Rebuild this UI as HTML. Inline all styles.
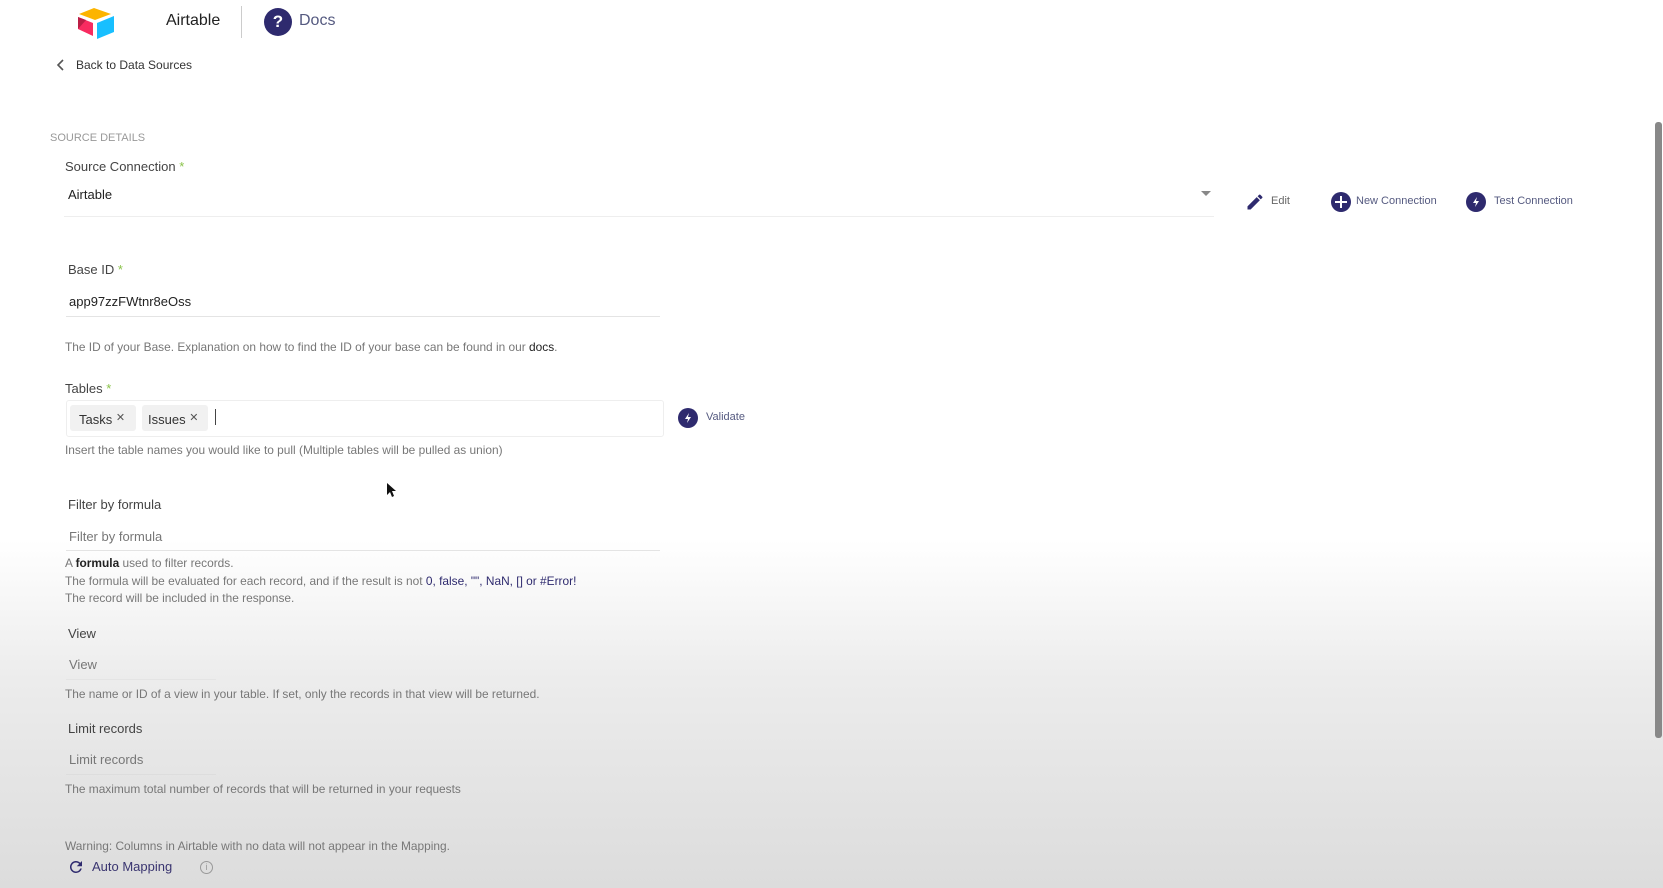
<!DOCTYPE html>
<html><head><meta charset="utf-8"><style>
*{margin:0;padding:0;box-sizing:border-box}
body{width:1663px;height:888px;overflow:hidden;position:relative;font-family:"Liberation Sans",sans-serif;color:#333;
background:linear-gradient(#fff 0,#fff 540px,#ececec 680px,#dcdcdc 888px)}
.t{position:absolute;white-space:nowrap;line-height:1}
.l{font-size:13px;color:#444}
.h{font-size:11.9px;color:#777}
.u{position:absolute;height:1px;background:#e4e4e4}
.c{position:absolute;border-radius:50%;background:#2e2a6e}
.p{color:#2e2a6e}
</style></head><body>
<svg style="position:absolute;left:76px;top:7px" width="40" height="32" viewBox="0 0 40 32">
<path d="M18 1 L35 7 L19 13 L3 7 Z" fill="#fcb400"/>
<path d="M21 16 L38 9 V25 L21 32 Z" fill="#18bfff"/>
<path d="M2 10 L17 16 V29 L2 22 Z" fill="#f82b60"/>
<path d="M2 10 L10 13 L2 22Z" fill="#ba1e45"/>
</svg>
<div class="t" style="left:166px;top:13px;font-size:16px;color:#222">Airtable</div>
<div style="position:absolute;left:241px;top:6px;width:1px;height:32px;background:#ccc"></div>
<div class="c" style="left:264px;top:8px;width:28px;height:28px;color:#fff;font-weight:bold;font-size:17px;text-align:center;line-height:28px">?</div>
<div class="t p" style="left:299px;top:13px;font-size:16px;color:#555a80">Docs</div>
<svg style="position:absolute;left:56px;top:59px" width="10" height="12"><path d="M7 1 L2 6 L7 11" stroke="#555" stroke-width="1.6" fill="none"/></svg>
<div class="t" style="left:76px;top:59px;font-size:12px;color:#333">Back to Data Sources</div>
<div class="t" style="left:50px;top:133px;font-size:11px;color:#999">SOURCE DETAILS</div>
<div class="t l" style="left:65px;top:160px">Source Connection <span style="color:#8bc34a">*</span></div>
<div class="t" style="left:68px;top:188px;font-size:13px;color:#222">Airtable</div>
<div class="u" style="left:64px;top:216px;width:1150px;background:#eee"></div>
<svg style="position:absolute;left:1200px;top:190px" width="12" height="8"><path d="M1 1 H11 L6 6Z" fill="#888"/></svg>
<svg style="position:absolute;left:1245px;top:192px" width="20" height="20" viewBox="0 0 24 24"><path d="M3 17.25V21h3.75L17.81 9.94l-3.75-3.75L3 17.25zM20.71 7.04a1 1 0 000-1.41l-2.34-2.34a1 1 0 00-1.41 0l-1.83 1.83 3.75 3.75 1.83-1.83z" fill="#2e2a6e"/></svg>
<div class="t" style="left:1271px;top:196px;font-size:11px;color:#666">Edit</div>
<div class="c" style="left:1331px;top:192px;width:20px;height:20px"></div>
<div style="position:absolute;left:1335px;top:201px;width:12px;height:2px;background:#fff"></div>
<div style="position:absolute;left:1340px;top:196px;width:2px;height:12px;background:#fff"></div>
<div class="t" style="left:1356px;top:196px;font-size:11px;color:#555a80">New Connection</div>
<div class="c" style="left:1466px;top:192px;width:20px;height:20px"></div>
<svg style="position:absolute;left:1470px;top:196px" width="12" height="12"><path d="M7 1 L3 7 H6 L5 11 L9 5 H6Z" fill="#fff"/></svg>
<div class="t" style="left:1494px;top:196px;font-size:11px;color:#555a80">Test Connection</div>
<div style="position:absolute;left:1655px;top:122px;width:7px;height:616px;background:#888;border-radius:3px"></div>

<div class="t l" style="left:68px;top:263px">Base ID <span style="color:#8bc34a">*</span></div>
<div class="t" style="left:69px;top:295px;font-size:13px;color:#222">app97zzFWtnr8eOss</div>
<div class="u" style="left:66px;top:316px;width:594px"></div>
<div class="t h" style="left:65px;top:342px">The ID of your Base. Explanation on how to find the ID of your base can be found in our <span style="color:#222">docs</span>.</div>

<div class="t l" style="left:65px;top:382px">Tables <span style="color:#8bc34a">*</span></div>
<div style="position:absolute;left:66px;top:400px;width:598px;height:37px;border:1px solid #eee;border-radius:3px"></div>
<div class="t" style="left:70px;top:405px;width:66px;height:26px;background:#f1f1f1;border-radius:3px;font-size:13px;padding:5px 0 0 9px;line-height:16px">Tasks <span style="font-size:11px;vertical-align:3px;color:#555">✕</span></div>
<div class="t" style="left:142px;top:405px;width:66px;height:26px;background:#f1f1f1;border-radius:3px;font-size:13px;padding:5px 0 0 6px;line-height:16px">Issues <span style="font-size:11px;vertical-align:3px;color:#555">✕</span></div>
<div style="position:absolute;left:215px;top:409px;width:1px;height:16px;background:#444"></div>
<div class="c" style="left:678px;top:408px;width:20px;height:20px"></div>
<svg style="position:absolute;left:682px;top:412px" width="12" height="12"><path d="M7 1 L3 7 H6 L5 11 L9 5 H6Z" fill="#fff"/></svg>
<div class="t" style="left:706px;top:412px;font-size:11px;color:#555a80">Validate</div>
<div class="t h" style="left:65px;top:445px">Insert the table names you would like to pull (Multiple tables will be pulled as union)</div>
<svg style="position:absolute;left:386px;top:482px" width="10" height="16"><path d="M1 1 V13 L4 10 L6 15 L8 14 L6 9 H10Z" fill="#111"/></svg>

<div class="t l" style="left:68px;top:498px">Filter by formula</div>
<div class="t" style="left:69px;top:530px;font-size:13px;color:#777">Filter by formula</div>
<div class="u" style="left:66px;top:550px;width:594px"></div>
<div class="t h" style="left:65px;top:558px">A <b style="color:#222">formula</b> used to filter records.</div>
<div class="t h" style="left:65px;top:576px">The formula will be evaluated for each record, and if the result is not <span class="p">0, false, "", NaN, [] or #Error!</span></div>
<div class="t h" style="left:65px;top:593px">The record will be included in the response.</div>

<div class="t l" style="left:68px;top:627px">View</div>
<div class="t" style="left:69px;top:658px;font-size:13px;color:#777">View</div>
<div class="u" style="left:66px;top:679px;width:150px"></div>
<div class="t h" style="left:65px;top:689px">The name or ID of a view in your table. If set, only the records in that view will be returned.</div>
<div class="t l" style="left:68px;top:722px">Limit records</div>
<div class="t" style="left:69px;top:753px;font-size:13px;color:#777">Limit records</div>
<div class="u" style="left:66px;top:774px;width:150px;background:#ddd"></div>
<div class="t h" style="left:65px;top:784px">The maximum total number of records that will be returned in your requests</div>
<div class="t h" style="left:65px;top:841px">Warning: Columns in Airtable with no data will not appear in the Mapping.</div>
<svg style="position:absolute;left:67px;top:858px" width="18" height="18" viewBox="0 0 24 24"><path d="M17.65 6.35A8 8 0 1019.73 14h-2.08A6 6 0 1112 6c1.66 0 3.14.69 4.22 1.78L13 11h7V4l-2.35 2.35z" fill="#2e2a6e"/></svg>
<div class="t" style="left:92px;top:860px;font-size:13px;color:#3a3570">Auto Mapping</div>
<div style="position:absolute;left:200px;top:861px;width:13px;height:13px;border:1px solid #999;border-radius:50%;font-size:9px;color:#999;text-align:center;line-height:11px">i</div>
</body></html>
